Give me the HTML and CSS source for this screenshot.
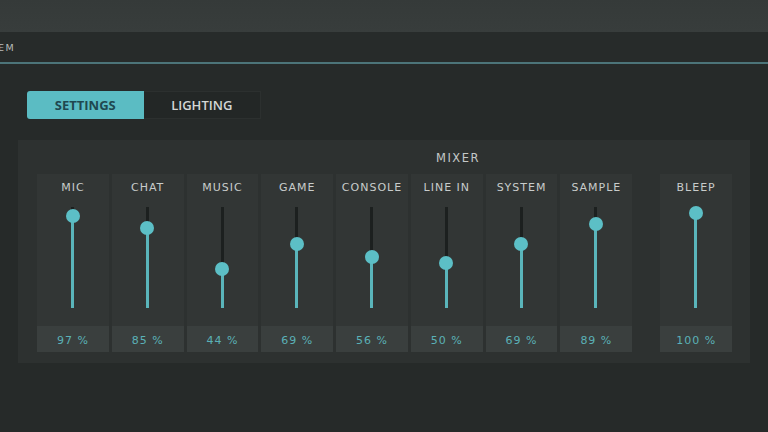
FILE: index.html
```html
<!DOCTYPE html>
<html lang="en">
<head>
  <meta charset="UTF-8">
  <title>Mixer</title>
  <link rel="stylesheet" href="styles.css">
</head>
<body>
  <div class="topbar"></div>
  <div class="nav">
    <span class="nav-item">EM</span>
  </div>

  <div class="content">
    <div class="tabs">
      <div class="tab active">SETTINGS</div>
      <div class="tab">LIGHTING</div>
    </div>

    <div class="mixer">
      <div class="mixer-title">MIXER</div>
      <div class="channels">
        <div class="channel"><div class="label">MIC</div><div class="slider" style="--v:97"><div class="track"><div class="fill"></div></div><div class="knob"></div></div><div class="value">97 %</div></div>
        <div class="channel"><div class="label">CHAT</div><div class="slider" style="--v:85"><div class="track"><div class="fill"></div></div><div class="knob"></div></div><div class="value">85 %</div></div>
        <div class="channel"><div class="label">MUSIC</div><div class="slider" style="--v:44"><div class="track"><div class="fill"></div></div><div class="knob"></div></div><div class="value">44 %</div></div>
        <div class="channel"><div class="label">GAME</div><div class="slider" style="--v:69"><div class="track"><div class="fill"></div></div><div class="knob"></div></div><div class="value">69 %</div></div>
        <div class="channel"><div class="label">CONSOLE</div><div class="slider" style="--v:56"><div class="track"><div class="fill"></div></div><div class="knob"></div></div><div class="value">56 %</div></div>
        <div class="channel"><div class="label">LINE IN</div><div class="slider" style="--v:50"><div class="track"><div class="fill"></div></div><div class="knob"></div></div><div class="value">50 %</div></div>
        <div class="channel"><div class="label">SYSTEM</div><div class="slider" style="--v:69"><div class="track"><div class="fill"></div></div><div class="knob"></div></div><div class="value">69 %</div></div>
        <div class="channel"><div class="label">SAMPLE</div><div class="slider" style="--v:89"><div class="track"><div class="fill"></div></div><div class="knob"></div></div><div class="value">89 %</div></div>
        <div class="channel bleep"><div class="label">BLEEP</div><div class="slider" style="--v:100"><div class="track"><div class="fill"></div></div><div class="knob"></div></div><div class="value">100 %</div></div>
      </div>
    </div>
  </div>
</body>
</html>
```

FILE: styles.css
```css
body {
  margin: 0;
  background-color: #262a29;
  font-family: 'DejaVu Sans', 'Liberation Sans', sans-serif;
  color: #c9cccb;
}
.topbar {
  height: 32px;
  background: linear-gradient(#353a39, #383d3c);
}
.nav {
  height: 30px;
  background-color: #272b2a;
  border-bottom: 2px solid #4c7479;
  display: flex;
  align-items: center;
}
.nav-item {
  margin-left: -2px;
  font-size: 9.5px;
  letter-spacing: 1.5px;
  color: #b8bcbb;
}
.content {
  padding: 27px 18px 0 18px;
}
.tabs {
  display: flex;
  margin-left: 9px;
  width: 234px;
  height: 28px;
}
.tab {
  flex: 1;
  display: flex;
  align-items: center;
  justify-content: center;
  font-family: 'Open Sans', 'DejaVu Sans', sans-serif;
  font-size: 13px;
  font-weight: 600;
  color: #d3d6d5;
  background-color: #232726;
  border: 1px solid #2c302f;
  border-left: none;
}
.tab.active {
  background-color: #5bbcc3;
  color: #1f4850;
  font-weight: 700;
  border: none;
  border-radius: 3px 0 0 3px;
}
.mixer {
  margin-top: 21px;
  width: 732px;
  height: 223px;
  box-sizing: border-box;
  background-color: #2d3130;
  padding: 11px 18px 0 19px;
}
.mixer-title {
  padding-left: 399px;
  font-size: 11.5px;
  letter-spacing: 1.5px;
  color: #c4c8c7;
  height: 23px;
}
.channels {
  display: flex;
  gap: 3px;
}
.channel {
  width: 72px;
  height: 178px;
  background-color: #323635;
  display: flex;
  flex-direction: column;
}
.channel.bleep {
  margin-left: 25px;
}
.label {
  height: 26px;
  padding-top: 7px;
  box-sizing: border-box;
  text-align: center;
  font-size: 11px;
  letter-spacing: 1px;
  color: #c8cccb;
}
.slider {
  position: relative;
  height: 126px;
}
.track {
  position: absolute;
  left: 34px;
  top: 7px;
  width: 3px;
  height: 101px;
  background-color: #1c201f;
}
.fill {
  position: absolute;
  left: 0;
  bottom: 0;
  width: 3px;
  height: calc((var(--v) - 5) * 1px);
  background-color: #5ab5bb;
}
.knob {
  position: absolute;
  left: 28.5px;
  top: calc((113 - var(--v) - 7) * 1px);
  width: 14px;
  height: 14px;
  border-radius: 50%;
  background-color: #5cbfc6;
}
.value {
  height: 26px;
  padding-top: 3px;
  box-sizing: border-box;
  background-color: #3a3f3e;
  display: flex;
  align-items: center;
  justify-content: center;
  font-size: 11px;
  letter-spacing: 1px;
  color: #5ab1b7;
}
```
